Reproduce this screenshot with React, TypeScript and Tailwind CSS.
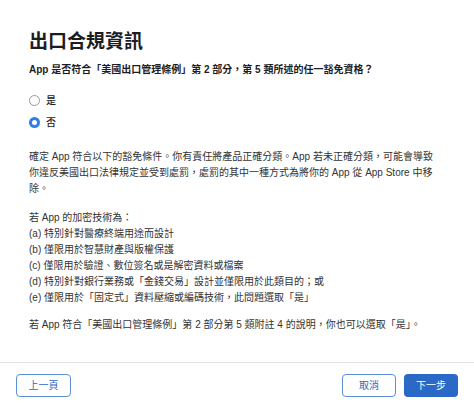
import React, { useState } from 'react';

const font = { fontFamily: '"Liberation Sans", "Noto Sans CJK TC", sans-serif' };

const exemptions = [
  '(a) 特別針對醫療終端用途而設計',
  '(b) 僅限用於智慧財產與版權保護',
  '(c) 僅限用於驗證、數位簽名或是解密資料或檔案',
  '(d) 特別針對銀行業務或「金錢交易」設計並僅限用於此類目的；或',
  '(e) 僅限用於「固定式」資料壓縮或編碼技術，此問題選取「是」',
];

const Radio: React.FC<{ checked: boolean; label: string; onSelect: () => void }> = ({
  checked,
  label,
  onSelect,
}) => {
  return (
    <label className="flex items-center gap-[6px] h-4 cursor-pointer" onClick={onSelect}>
      {checked ? (
        <span className="w-[11px] h-[11px] rounded-full bg-[#2f7ee6] flex items-center justify-center">
          <span className="w-[5px] h-[5px] rounded-full bg-white" />
        </span>
      ) : (
        <span className="w-[11px] h-[11px] rounded-full border border-[#9a9a9a] bg-white" />
      )}
      <span className="text-[10px] font-medium text-[#1d1d1f]">{label}</span>
    </label>
  );
};

export default function App() {
  const [answer, setAnswer] = useState<'yes' | 'no'>('no');

  return (
    <div className="w-[474px] h-[408px] bg-white flex flex-col" style={font}>
      <div className="flex-1 px-[29px] pt-[30px]">
        <h1 className="text-[19px] leading-6 font-bold text-[#1d1d1f]">出口合規資訊</h1>
        <p className="mt-2 text-[10px] leading-4 font-bold text-[#1d1d1f]">
          App 是否符合「美國出口管理條例」第 2 部分，第 5 類所述的任一豁免資格？
        </p>

        <div className="mt-[14px] flex flex-col gap-[6px]">
          <Radio checked={answer === 'yes'} label="是" onSelect={() => setAnswer('yes')} />
          <Radio checked={answer === 'no'} label="否" onSelect={() => setAnswer('no')} />
        </div>

        <div className="mt-[19px] w-[412px] text-[10px] leading-4 text-[#333333]">
          <p>
            確定 App 符合以下的豁免條件。你有責任將產品正確分類。App 若未正確分類，可能會導致你違反美國出口法律規定並受到處罰，處罰的其中一種方式為將你的 App 從 App Store 中移除。
          </p>
          <p className="mt-[13px]">若 App 的加密技術為：</p>
          {exemptions.map((line) => (
            <p key={line}>{line}</p>
          ))}
          <p className="mt-[11px]">若 App 符合「美國出口管理條例」第 2 部分第 5 類附註 4 的說明，你也可以選取「是」。</p>
        </div>
      </div>

      <div className="h-[46px] border-t border-[#e3e3e3] px-4 flex items-center justify-between">
        <button className="h-[23px] w-[55px] rounded-[4px] border border-[#5b8fd6] bg-white text-[10px] text-[#2a6ac6]">
          上一頁
        </button>
        <div className="flex items-center gap-2">
          <button className="h-[23px] w-[54px] rounded-[4px] border border-[#5b8fd6] bg-white text-[10px] text-[#2a6ac6]">
            取消
          </button>
          <button className="h-[23px] w-[54px] rounded-[4px] bg-[#2a6ac6] text-[10px] text-white">
            下一步
          </button>
        </div>
      </div>
    </div>
  );
}
